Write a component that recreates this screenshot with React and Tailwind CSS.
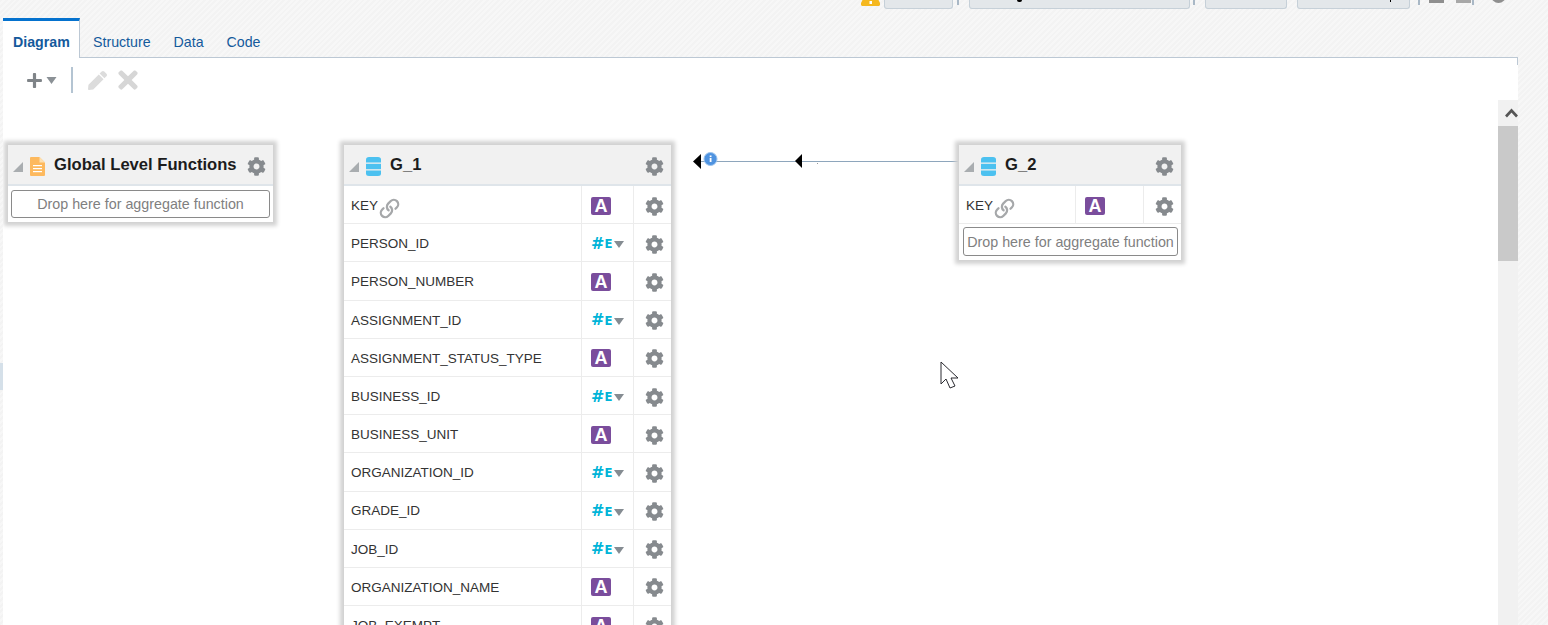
import React from "react";
import { FaCog, FaPlus, FaPen, FaTimes } from "react-icons/fa";
import { Link as LinkIcon } from "lucide-react";

const Gear = () => <FaCog className="w-[19px] h-[19px] text-[#868a8e] shrink-0 mt-[3px]" />;

const Corner = () => (
  <svg width="10" height="10" viewBox="0 0 10 10" className="shrink-0 mt-[4px]">
    <polygon points="10,0 10,10 0,10" fill="#a9adb0" />
  </svg>
);

const Caret = ({ w = 10, h = 7, c = "#858c92" }) => (
  <svg width={w} height={h} viewBox="0 0 10 7" className="shrink-0">
    <polygon points="0,0 10,0 5,7" fill={c} />
  </svg>
);

const TextBadge = () => (
  <span className="mt-[2px] w-[20px] h-[18px] rounded-[2px] bg-[#7a4d9c] text-white font-bold text-[18px] leading-[18px] flex items-center justify-center">
    A
  </span>
);

const NumBadge = () => (
  <span className="mt-[2px] flex items-center text-[#00b4d8] font-bold font-['DejaVu_Sans',sans-serif]">
    <span className="text-[16px] leading-[18px] w-[13px]">#</span>
    <span className="text-[13px] leading-[18px] w-[8px] mt-[1px] scale-x-90">E</span>
    <span className="ml-[2px] mt-[2px]">
      <Caret />
    </span>
  </span>
);

const Header = ({ icon, title, className = "" }) => (
  <div className={`h-[41px] bg-[#f1f1f1] border-b-2 border-[#dfe5ea] flex items-center pl-[5px] pr-[7px] ${className}`}>
    <Corner />
    {icon}
    <span className="font-bold text-[16.6px] leading-[20px] text-[#1c1c1c] whitespace-nowrap mt-[1px]">{title}</span>
    <span className="ml-auto">
      <Gear />
    </span>
  </div>
);

const DbIcon = (
  <svg width="15" height="19" viewBox="0 0 15 19" className="ml-[7px] mr-[9px] shrink-0 mt-[3px]">
    <path d="M0 2.5 Q0 0 3 0 H12 Q15 0 15 2.5 V5.5 H0 Z" fill="#4cc1f0" />
    <rect x="0" y="6.8" width="15" height="5.4" fill="#4cc1f0" />
    <path d="M0 13.5 H15 V16.5 Q15 19 12 19 H3 Q0 19 0 16.5 Z" fill="#4cc1f0" />
  </svg>
);
const FileIcon = (
  <svg width="15" height="19" viewBox="0 0 15 19" className="ml-[7px] mr-[9px] shrink-0 mt-[3px]">
    <path d="M0 1 Q0 0 1 0 H9.5 L15 5.5 V18 Q15 19 14 19 H1 Q0 19 0 18 Z" fill="#fdb95e" />
    <path d="M9.5 0 V5.5 H15 Z" fill="#fee0b0" />
    <rect x="3" y="8" width="9" height="1.2" fill="#fff" />
    <rect x="3" y="11" width="9" height="1.2" fill="#fff" />
    <rect x="3" y="14" width="9" height="1.2" fill="#fff" />
  </svg>
);

const Row = ({ name, type, link, cols }) => (
  <div className={`grid ${cols} h-[38.2px] border-b border-[#ececec]`}>
    <div className="flex items-center pl-[7px] text-[13.5px] text-[#333] whitespace-nowrap">
      <span className="mt-[3px]">{name}</span>
      {link && <LinkIcon className="w-[21px] h-[21px] text-[#a6a8aa] ml-[1px] mt-[7px]" strokeWidth={2.6} style={{ transform: "scaleX(-1) rotate(90deg)" }} />}
    </div>
    <div className="flex items-center pl-[9px] border-l border-[#ececec]">
      {type === "A" ? <TextBadge /> : <NumBadge />}
    </div>
    <div className="flex items-center pl-[11px] border-l border-[#ececec]">
      <Gear />
    </div>
  </div>
);

const DropBox = ({ className = "" }) => (
  <div className={`border border-[#8a8a8a] rounded-[3px] bg-white text-[14.3px] text-[#808080] flex items-center justify-center whitespace-nowrap pt-[2px] ${className}`}>
    Drop here for aggregate function
  </div>
);

const rows = [
  ["KEY", "A", true],
  ["PERSON_ID", "N"],
  ["PERSON_NUMBER", "A"],
  ["ASSIGNMENT_ID", "N"],
  ["ASSIGNMENT_STATUS_TYPE", "A"],
  ["BUSINESS_ID", "N"],
  ["BUSINESS_UNIT", "A"],
  ["ORGANIZATION_ID", "N"],
  ["GRADE_ID", "N"],
  ["JOB_ID", "N"],
  ["ORGANIZATION_NAME", "A"],
  ["JOB_EXEMPT", "A"],
];

const nodeCls = "absolute bg-white shadow-[0_0_4px_4px_#d2d2d2]";

const TopBtn = ({ w, ml, mark }) => (
  <div className={`relative h-[9px] ${w} ${ml} bg-[#e3e7ea] border border-t-0 border-[#c6d0d8] rounded-b-[3px]`}>
    {mark}
  </div>
);
const Sep = ({ ml }) => <div className={`w-[2px] h-[5px] bg-[#a9b8c6] ${ml}`} />;

export default function App() {
  return (
    <div className="h-[625px] w-full overflow-hidden relative flex flex-col font-['Liberation_Sans',Arial,sans-serif] bg-[repeating-linear-gradient(135deg,#f3f3f3_0px,#f3f3f3_2px,#f7f7f7_2px,#f7f7f7_4px)]">
      {/* top toolbar, clipped by the top of the window */}
      <div className="h-[18px] flex items-start shrink-0 pl-[861px]">
        <svg width="19" height="6" viewBox="0 0 19 6">
          <polygon points="1.5,0 17.5,0 19,3 19,5 18,6 1,6 0,5 0,3" fill="#f5b81f" />
          <rect x="8.5" y="1" width="2.5" height="3" fill="#fff" />
        </svg>
        <TopBtn w="w-[69px]" ml="ml-[4px]" />
        <Sep ml="ml-[4px]" />
        <TopBtn w="w-[221px]" ml="ml-[10px]" mark={<span className="absolute left-[47px] top-0 w-[5px] h-[2px] rounded-b-full bg-black" />} />
        <Sep ml="ml-[3px]" />
        <TopBtn w="w-[82px]" ml="ml-[10px]" />
        <TopBtn w="w-[113px]" ml="ml-[10px]" mark={<span className="absolute left-[92px] top-0 w-[1px] h-[2px] bg-black" />} />
        <Sep ml="ml-[8px]" />
        <div className="w-[15px] h-[3px] bg-[#8f8f8f] ml-[9px]" />
        <div className="w-[15px] h-[3px] bg-[#a8a8a8] ml-[12px]" />
        <Sep ml="ml-[1px]" />
        <div className="w-[15px] h-[15px] bg-[#8f8f8f] rounded-full -mt-[12px] ml-[17px]" />
      </div>

      {/* tabs */}
      <div className="h-[39px] flex items-start pl-[3px] shrink-0 text-[14.2px] leading-[20px] text-[#145a9c]">
        <div className="relative z-10 h-[40px] w-[77px] bg-white border-t-[3px] border-[#0572ce] border-r border-r-[#bcc8d4] pt-[11px] pl-[10px] font-bold">
          Diagram
        </div>
        <div className="pt-[14px] ml-[13px]">Structure</div>
        <div className="pt-[14px] ml-[23px]">Data</div>
        <div className="pt-[14px] ml-[23px]">Code</div>
      </div>

      {/* panel */}
      <div className="ml-[3px] w-[1515px] flex-1 bg-white border-t border-[#bcc8d4] flex flex-col relative min-h-0">
        <div className="absolute right-0 top-0 w-[1px] h-[7px] bg-[#bcc8d4]" />
        <div className="h-[42px] shrink-0 flex items-center pl-[23px] pt-[2px]">
          <FaPlus className="w-[17px] h-[17px] text-[#7f8488]" />
          <span className="ml-[3px]"><Caret w={11} h={7} c="#8b9196" /></span>
          <div className="ml-[14px] w-[2px] h-[26px] bg-[#b4c4d2]" />
          <FaPen className="ml-[15px] w-[19px] h-[19px] text-[#dcdcdc]" />
          <FaTimes className="ml-[11px] w-[20px] h-[28px] text-[#d6d6d6]" />
        </div>

        <div className="flex-1 flex min-h-0">
          {/* diagram canvas */}
          <div className="flex-1 relative overflow-hidden">
            <div className={`${nodeCls} left-[5px] top-[45px] w-[265px] h-[77px]`}>
              <Header icon={FileIcon} title="Global Level Functions" />
              <DropBox className="mx-[3px] mt-[4px] h-[28px]" />
            </div>

            <div className={`${nodeCls} left-[341px] top-[45px] w-[327px]`}>
              <Header icon={DbIcon} title="G_1" />
              {rows.map(([n, t, l]) => (
                <Row key={n} name={n} type={t} link={l} cols="grid-cols-[237px_52px_38px]" />
              ))}
            </div>

            <svg className="absolute left-[685px] top-[50px]" width="275" height="25" viewBox="0 0 275 25">
              <line x1="12" y1="11.5" x2="270" y2="11.5" stroke="#8ea6bc" strokeWidth="1" />
              <polygon points="13,4 5,11.5 13,19" fill="#000" />
              <polygon points="114,4 107,11 114,18" fill="#000" />
              <rect x="129" y="13" width="1" height="1" fill="#999" />
              <circle cx="22.5" cy="9" r="6.5" fill="#4f93e0" stroke="#9cc4ee" strokeWidth="1" />
              <rect x="21.7" y="8" width="1.8" height="4" fill="#fff" />
              <rect x="21.7" y="5.5" width="1.8" height="1.6" fill="#fff" />
            </svg>

            <div className={`${nodeCls} left-[956px] top-[45px] w-[222px] h-[115px]`}>
              <Header icon={DbIcon} title="G_2" />
              <Row name="KEY" type="A" link cols="grid-cols-[116px_68px_38px]" />
              <DropBox className="ml-[4px] mr-[3px] mt-[3px] h-[29px]" />
            </div>

            {/* mouse pointer */}
            <svg className="absolute left-[937px] top-[261px]" width="20" height="28" viewBox="0 0 20 28">
              <polygon points="1,1 1,23 6,18 10,27 15,25 11,17 18,17" fill="#fff" stroke="#2a2a30" strokeWidth="1" />
            </svg>
          </div>

          {/* vertical scrollbar */}
          <div className="w-[20px] shrink-0 bg-[#f1f1f1] flex flex-col">
            <div className="h-[26px] flex items-center justify-center pl-[6px]">
              <svg width="13" height="10" viewBox="0 0 13 10">
                <polyline points="1,8.5 6.5,2.5 12,8.5" fill="none" stroke="#555" strokeWidth="2.6" />
              </svg>
            </div>
            <div className="h-[135px] bg-[#c9c9c9]" />
          </div>
        </div>
      </div>

      {/* splitter handle on the left edge */}
      <div className="absolute left-0 top-[363px] w-[3px] h-[27px] bg-[#d5e0e9]" />
    </div>
  );
}
